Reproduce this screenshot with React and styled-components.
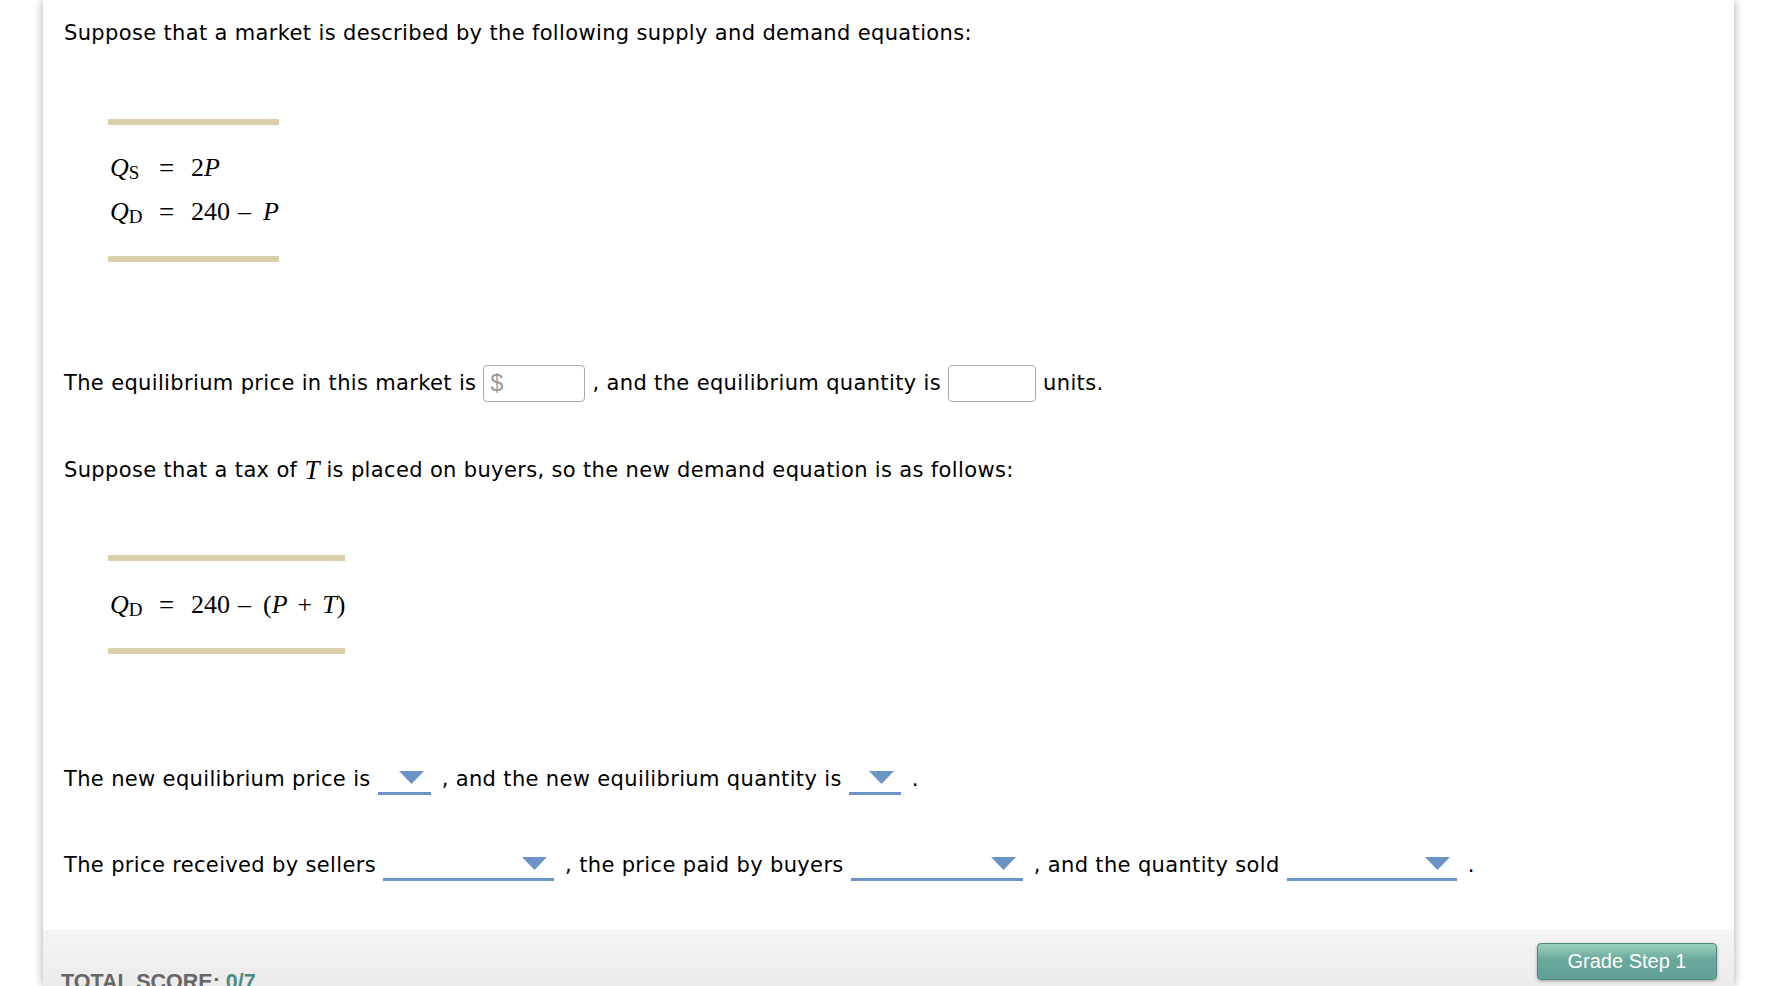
import React from "react";
import styled, { createGlobalStyle } from "styled-components";

const Global = createGlobalStyle`
  html, body { margin: 0; padding: 0; background: #ffffff; overflow: hidden; }
  body { font-family: "DejaVu Sans", Verdana, sans-serif; color: #000; }
  * { box-sizing: border-box; }
`;

const Page = styled.div`
  height: 986px;
  padding: 0 42px 0 43px;
  background: #fff;
`;

const Panel = styled.div`
  height: 100%;
  background: #fff;
  box-shadow: 0 0 9px rgba(0, 0, 0, 0.35);
  display: flex;
  flex-direction: column;
`;

const Content = styled.div`
  height: 930px;
  flex-shrink: 0;
  padding: 21px 21px 0 21px;
  display: flex;
  flex-direction: column;
  align-items: flex-start;
`;

const Para = styled.div`
  font-size: 21px;
  letter-spacing: 0.35px;
  line-height: ${(p) => p.$lh || 24}px;
  margin-top: ${(p) => p.$mt || 0}px;
  display: flex;
  align-items: center;
  white-space: pre;
`;

const MathVar = styled.span`
  font-family: "Liberation Serif", "Times New Roman", serif;
  font-style: italic;
  font-size: 27px;
  letter-spacing: 0;
`;

const EqBlock = styled.div`
  margin-top: ${(p) => p.$mt}px;
  margin-left: 44px;
  border-top: 6px solid #d9cfab;
  border-bottom: 6px solid #d9cfab;
  padding: ${(p) => p.$pt}px 0 ${(p) => p.$pb}px 0;
  font-family: "Liberation Serif", "Times New Roman", serif;
  font-size: 26px;
`;

const EqRow = styled.div`
  display: grid;
  grid-template-columns: 51px 32px auto;
  height: 44px;
  align-items: center;
  white-space: nowrap;
`;

const Lhs = styled.span`
  padding-left: 2px;
`;

const Q = styled.i``;

const Sub = styled.span`
  font-size: 19px;
  position: relative;
  top: 3px;
`;

const Eq = styled.span`
  text-align: left;
  font-size: 27px;
`;

const Op = styled.span`
  display: inline-block;
  margin: 0 ${(p) => p.$r || 12}px 0 ${(p) => p.$l || 8}px;
`;

const Input = styled.span`
  display: inline-flex;
  align-items: center;
  width: ${(p) => p.$w}px;
  height: 37px;
  border: 1px solid #a9a9a9;
  border-radius: 4px;
  padding-left: 6px;
  color: #9a9a9a;
  font-family: "Liberation Sans", Arial, sans-serif;
  font-size: 23px;
  letter-spacing: 0;
`;

const Drop = styled.span`
  display: inline-flex;
  justify-content: flex-end;
  align-items: flex-start;
  width: ${(p) => p.$w}px;
  height: 30px;
  margin-right: 4px;
  padding: 6px 7px 0 0;
  border-bottom: 3px solid #6a94c6;
  position: relative;
  top: 1px;
`;

const Tri = styled.svg`
  display: block;
`;

const Triangle = () => (
  <Tri width="25" height="13" viewBox="0 0 25 13">
    <polygon points="0,0 25,0 12.5,13" fill="#6a94c6" />
  </Tri>
);

const Footer = styled.div`
  flex: 1;
  background: linear-gradient(#f5f5f5, #e9e9e9);
  display: flex;
  justify-content: space-between;
  align-items: flex-start;
  padding: 0 17px 0 18px;
`;

const Score = styled.div`
  margin-top: 40px;
  font-family: "Liberation Sans", Arial, sans-serif;
  font-weight: bold;
  font-size: 21.5px;
  color: #666;
`;

const ScoreVal = styled.span`
  color: #4b8c86;
`;

const Button = styled.button`
  margin-top: 13px;
  width: 180px;
  height: 37px;
  border: 1px solid #4f8a80;
  border-radius: 4px;
  background: linear-gradient(#9ad1bd, #6aa89c 45%, #62a095);
  box-shadow: 0 1px 3px rgba(0, 0, 0, 0.35);
  color: #fff;
  font-family: "Liberation Sans", Arial, sans-serif;
  font-size: 20px;
  padding: 0;
`;

export default function App() {
  return (
    <>
      <Global />
      <Page>
        <Panel>
          <Content>
            <Para>Suppose that a market is described by the following supply and demand equations:</Para>
            <EqBlock $mt={74} $pt={21} $pb={22}>
              <EqRow>
                <Lhs><Q>Q</Q><Sub>S</Sub></Lhs>
                <Eq>=</Eq>
                <span>2<i>P</i></span>
              </EqRow>
              <EqRow>
                <Lhs><Q>Q</Q><Sub>D</Sub></Lhs>
                <Eq>=</Eq>
                <span>240<Op>–</Op><i>P</i></span>
              </EqRow>
            </EqBlock>
            <Para $mt={103} $lh={37}>
              {"The equilibrium price in this market is "}
              <Input $w={102}>$</Input>
              {" , and the equilibrium quantity is "}
              <Input $w={88} />
              {" units."}
            </Para>
            <Para $mt={56}>
              {"Suppose that a tax of "}
              <MathVar>T</MathVar>
              {" is placed on buyers, so the new demand equation is as follows:"}
            </Para>
            <EqBlock $mt={73} $pt={22} $pb={21}>
              <EqRow>
                <Lhs><Q>Q</Q><Sub>D</Sub></Lhs>
                <Eq>=</Eq>
                <span>240<Op>–</Op>(<i>P</i><Op $l={10} $r={10}>+</Op><i>T</i>)</span>
              </EqRow>
            </EqBlock>
            <Para $mt={110}>
              {"The new equilibrium price is "}
              <Drop $w={53}><Triangle /></Drop>
              {" , and the new equilibrium quantity is "}
              <Drop $w={52}><Triangle /></Drop>
              {" ."}
            </Para>
            <Para $mt={56}>
              {"The price received by sellers "}
              <Drop $w={171}><Triangle /></Drop>
              {" , the price paid by buyers "}
              <Drop $w={172}><Triangle /></Drop>
              {" , and the quantity sold "}
              <Drop $w={170}><Triangle /></Drop>
              {" ."}
            </Para>
          </Content>
          <Footer>
            <Score>TOTAL SCORE: <ScoreVal>0/7</ScoreVal></Score>
            <Button>Grade Step 1</Button>
          </Footer>
        </Panel>
      </Page>
    </>
  );
}
